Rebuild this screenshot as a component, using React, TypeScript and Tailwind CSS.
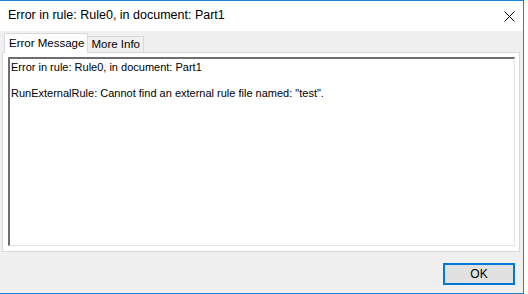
import React from 'react';

const uiFont = { fontFamily: '"Liberation Sans", Arial, sans-serif' };
const boxFont = { fontFamily: '"Liberation Sans", Arial, sans-serif' };

function CloseIcon() {
  return (
    <svg width="11" height="11" viewBox="0 0 11 11" className="block">
      <path d="M0.5 0.5 L10.5 10.5 M10.5 0.5 L0.5 10.5" stroke="#000" strokeWidth="1" fill="none" />
    </svg>
  );
}

export default function App() {
  return (
    <div className="w-[528px] h-[294px] bg-white flex overflow-hidden">
      <div className="w-[524px] h-[294px] flex flex-col border-t border-r border-b border-[#1883d7]">
        {/* title bar */}
        <div className="h-[30px] bg-white flex items-center justify-between pl-2 pr-[8px]">
          <span className="text-[12.5px] text-black leading-none pb-[1px]" style={uiFont}>
            Error in rule: Rule0, in document: Part1
          </span>
          <CloseIcon />
        </div>

        {/* body */}
        <div className="flex-1 bg-[#f0f0f0] flex flex-col pl-[2px] pr-[2px]">
          {/* tabs */}
          <div className="flex items-end h-[21px] pl-[2px]">
            <div
              className="h-[20px] pl-[4px] pr-[3px] bg-white border border-b-0 border-[#d9d9d9] text-[11.5px] leading-[18px] text-black relative z-10 -mb-[1px]"
              style={uiFont}
            >
              Error Message
            </div>
            <div
              className="h-[16px] px-[3px] bg-[#f0f0f0] border border-l-0 border-b-0 border-[#d9d9d9] text-[11.5px] leading-[15px] text-black"
              style={uiFont}
            >
              More Info
            </div>
          </div>

          {/* tab panel */}
          <div className="w-[518px] h-[200px] bg-white border border-[#d9d9d9] pl-[5px] pt-[4px] pr-[4px] pb-[5px]">
            <div className="h-full bg-white border-t-2 border-l-2 border-t-[#6e6e6e] border-l-[#6e6e6e] border-r border-b border-r-[#e3e3e3] border-b-[#e3e3e3] pl-[1px] pt-[2px]">
              <div className="text-[11px] leading-[13px] text-black" style={boxFont}>
                <div>Error in rule: Rule0, in document: Part1</div>
                <div className="h-[13px]" />
                <div>RunExternalRule: Cannot find an external rule file named: "test".</div>
              </div>
            </div>
          </div>

          {/* footer */}
          <div className="flex-1 flex justify-end items-start pt-[11px] pr-[4px]">
            <button
              className="w-[72px] h-[22px] bg-[#e1e1e1] border-2 border-[#0078d7] text-[12px] text-black leading-none flex items-center justify-center mr-[2px]"
              style={uiFont}
            >
              OK
            </button>
          </div>
        </div>
      </div>
    </div>
  );
}
